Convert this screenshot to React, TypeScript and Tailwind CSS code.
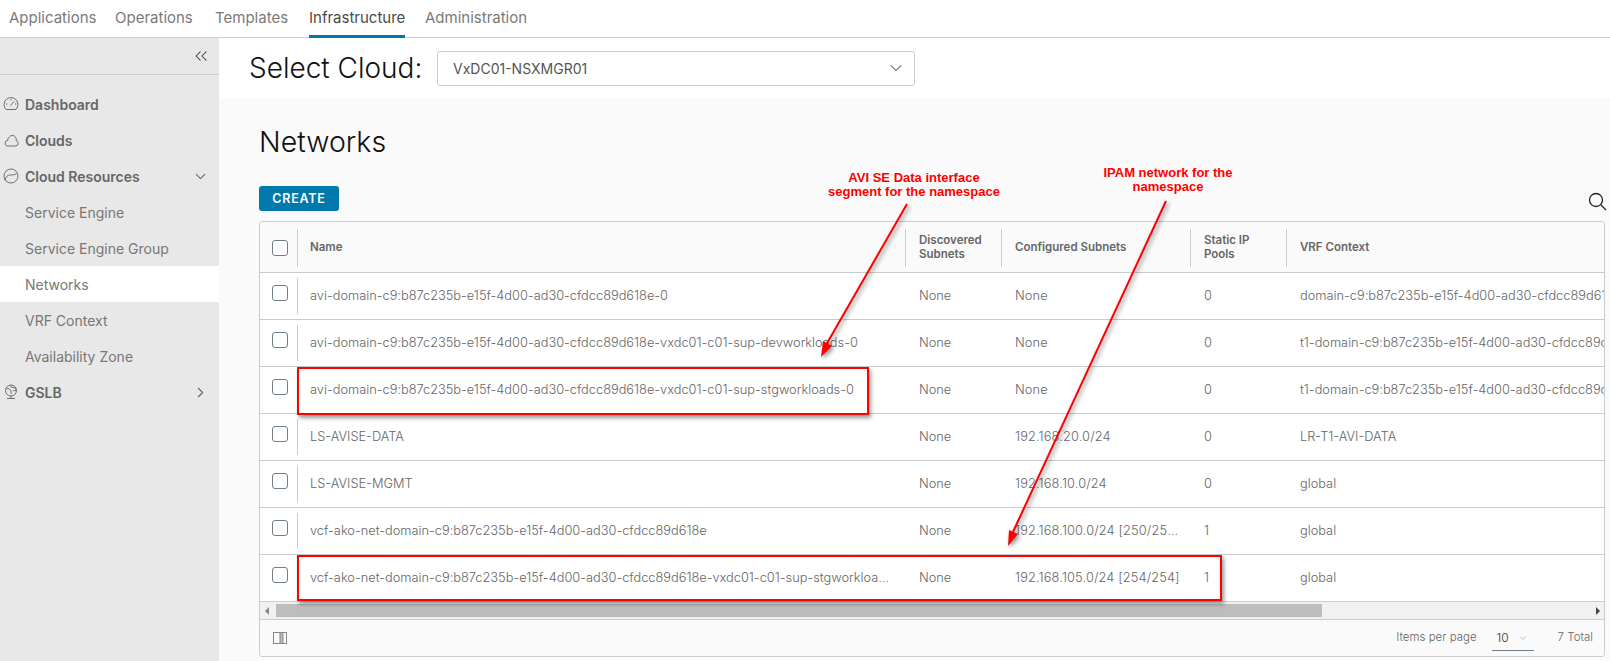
import React from "react";
import { ChevronDown, ChevronRight, ChevronsLeft } from "lucide-react";

const NAME_1 = "avi-domain-c9:b87c235b-e15f-4d00-ad30-cfdcc89d618e";
const VRF_1 = "domain-c9:b87c235b-e15f-4d00-ad30-cfdcc89d618e";

const rows = [
    { name: NAME_1 + "-0", disc: "None", conf: "None", pools: "0", vrf: VRF_1 + "-0" },
    { name: NAME_1 + "-vxdc01-c01-sup-devworkloads-0", disc: "None", conf: "None", pools: "0", vrf: "t1-" + VRF_1 + "-vxdc01-c01-sup-devworkloads-0" },
    { name: NAME_1 + "-vxdc01-c01-sup-stgworkloads-0", disc: "None", conf: "None", pools: "0", vrf: "t1-" + VRF_1 + "-vxdc01-c01-sup-stgworkloads-0" },
    { name: "LS-AVISE-DATA", disc: "None", conf: "192.168.20.0/24", pools: "0", vrf: "LR-T1-AVI-DATA" },
    { name: "LS-AVISE-MGMT", disc: "None", conf: "192.168.10.0/24", pools: "0", vrf: "global" },
    { name: "vcf-ako-net-domain-c9:b87c235b-e15f-4d00-ad30-cfdcc89d618e", disc: "None", conf: "192.168.100.0/24 [250/254]", pools: "1", vrf: "global", cut: true },
    { name: "vcf-ako-net-domain-c9:b87c235b-e15f-4d00-ad30-cfdcc89d618e-vxdc01-c01-sup-stgworkloads-0", disc: "None", conf: "192.168.105.0/24 [254/254]", pools: "1", vrf: "global" },
];

const gridCols = "grid grid-cols-[37px_608px_96px_189px_96px_minmax(0,1fr)]";

function DashIcon() {
    return (
        <svg viewBox="0 0 16 16" className="w-[16px] h-[16px]" fill="none" stroke="#6f6f6f" strokeWidth="1">
            <path d="M3 13.5a7 7 0 1 1 10 0z" />
            <path d="M7.5 9.5l3.5-4M3.2 8h1.3M12 8h1.3M8 3v1.3" />
        </svg>
    );
}

function CloudIcon() {
    return (
        <svg viewBox="0 0 16 16" className="w-[16px] h-[16px]" fill="none" stroke="#6f6f6f" strokeWidth="1">
            <path d="M4 14h8.5a2.8 2.8 0 0 0 .6-5.5 3.4 3.4 0 0 0-.8-3.6A3.6 3.6 0 0 0 6.4 5a3.4 3.4 0 0 0-1.6 3.4A2.9 2.9 0 0 0 4 14z" />
        </svg>
    );
}

function ResourceIcon() {
    return (
        <svg viewBox="0 0 16 16" className="w-[16px] h-[16px]" fill="none" stroke="#6f6f6f" strokeWidth="1">
            <circle cx="8" cy="8" r="7" />
            <path d="M2 12.500c1-4 2.500-5.500 5.500-5.500 2.500 0 4.500-.5 6-1.500" />
        </svg>
    );
}

function GlobeIcon() {
    return (
        <svg viewBox="0 0 16 16" className="w-[16px] h-[16px]" fill="none" stroke="#6f6f6f" strokeWidth="1">
            <circle cx="8" cy="6.500" r="5.500" />
            <path d="M3.500 5c2-1 3 0 4 1s0 3 1 4M8 1.500c-1 1 0 2 2 2s3 1 3 3c-1 0-2 0-3 .5" />
            <path d="M4 14.500h8M8 12v2.500" />
        </svg>
    );
}

function Check({ className = "" }: { className?: string }) {
    return <div className={"w-[16px] h-[16px] rounded-[3px] border border-[#6f7f8a] bg-white " + className} />;
}

function SideHead({ icon, label, right }: { icon: React.ReactNode; label: string; right?: React.ReactNode }) {
    return (
        <div className="h-[36px] flex items-center pl-[3px] pr-[10px]">
            {icon}
            <span className="ml-[6px] text-[14px] font-semibold text-[#666] grow">{label}</span>
            {right}
        </div>
    );
}

function SideItem({ label, active = false }: { label: string; active?: boolean }) {
    return (
        <div className={"h-[36px] flex items-center pl-[25px] text-[14px] text-[#777] " + (active ? "bg-white" : "")}>
            {label}
        </div>
    );
}

function HeadCell({ children, sep = true, className = "pl-[14px]" }: { children: React.ReactNode; sep?: boolean; className?: string }) {
    return (
        <div className={"relative flex items-center pr-2 text-[11.5px] leading-[14px] font-semibold text-[#666] " + className}>
            {sep && <span className="absolute left-0 top-[7px] bottom-[5px] w-px bg-[#ccc]" />}
            <span>{children}</span>
        </div>
    );
}

function Annotations() {
    return (
        <div className="absolute inset-0 pointer-events-none">
            <div className="absolute left-[297px] top-[367px] w-[572px] h-[48px] border-2 border-[#f00] shadow-[2px_3px_4px_rgba(0,0,0,0.4)]" />
            <div className="absolute left-[297px] top-[555px] w-[925px] h-[46px] border-2 border-[#f00] shadow-[2px_3px_4px_rgba(0,0,0,0.4)]" />
            <svg className="absolute left-0 top-0 w-[1610px] h-[661px] drop-shadow-[2px_2px_2px_rgba(0,0,0,0.45)]" viewBox="0 0 1610 661" fill="none">
                <path d="M907 204L826 345" stroke="#f00" strokeWidth="2" />
                <path d="M821 357L823 341L832 346z" fill="#f00" />
                <path d="M1166 201L1013 532" stroke="#f00" strokeWidth="2" />
                <path d="M1008 546L1009 530L1018 534z" fill="#f00" />
            </svg>
            <div className="absolute left-[814px] top-[171px] w-[200px] text-center font-['Liberation_Sans',sans-serif] font-bold text-[13px] leading-[14px] text-[#f00]">
                AVI SE Data interface<br />segment for the namespace
            </div>
            <div className="absolute left-[1068px] top-[166px] w-[200px] text-center font-['Liberation_Sans',sans-serif] font-bold text-[13px] leading-[14px] text-[#f00]">
                IPAM network for the<br />namespace
            </div>
        </div>
    );
}

export default function App() {
    return (
        <div className="relative w-[1610px] h-[661px] overflow-hidden bg-white font-['Inter',sans-serif] flex flex-col">
            {/* top tabs */}
            <div className="h-[38px] shrink-0 border-b border-[#ccc] flex pl-[9px] gap-[20px] text-[15px] text-[#7a7a7a]">
                <div className="pt-[7px] w-[86px] whitespace-nowrap">Applications</div>
                <div className="pt-[7px] w-[80px] whitespace-nowrap">Operations</div>
                <div className="pt-[7px] w-[74px] whitespace-nowrap">Templates</div>
                <div className="pt-[7px] w-[96px] h-[38px] border-b-[3px] border-[#0079ad] text-[#4a4a4a] whitespace-nowrap">Infrastructure</div>
                <div className="pt-[7px] whitespace-nowrap">Administration</div>
            </div>
            <div className="flex grow min-h-0">
                {/* sidebar */}
                <div className="w-[219px] shrink-0 bg-[#e8e8e8]">
                    <div className="h-[37px] border-b border-[#ccc] flex items-center justify-end pr-[8px]">
                        <ChevronsLeft size={20} strokeWidth={1.25} color="#444" />
                    </div>
                    <div className="pt-[11px]">
                        <SideHead icon={<DashIcon />} label="Dashboard" />
                        <SideHead icon={<CloudIcon />} label="Clouds" />
                        <SideHead icon={<ResourceIcon />} label="Cloud Resources" right={<ChevronDown size={17} strokeWidth={1.5} color="#666" />} />
                        <SideItem label="Service Engine" />
                        <SideItem label="Service Engine Group" />
                        <SideItem label="Networks" active />
                        <SideItem label="VRF Context" />
                        <SideItem label="Availability Zone" />
                        <SideHead icon={<GlobeIcon />} label="GSLB" right={<ChevronRight size={17} strokeWidth={1.5} color="#666" />} />
                    </div>
                </div>
                {/* main */}
                <div className="grow min-w-0 flex flex-col">
                    <div className="h-[60px] shrink-0 flex items-center pl-[30px] bg-white">
                        <span className="text-[28px] font-light text-[#111] w-[188px] whitespace-nowrap">Select Cloud:</span>
                        <div className="w-[478px] h-[35px] border border-[#ccc] rounded-[3px] flex items-center justify-between pl-[15px] pr-[8px] text-[14px] text-[#555]">
                            <span>VxDC01-NSXMGR01</span>
                            <ChevronDown size={20} strokeWidth={1.25} color="#555" />
                        </div>
                    </div>
                    <div className="grow bg-[#fafafa] pl-[40px] pr-[5px] pt-[28px]">
                        <h1 className="text-[28.5px] leading-[32px] font-light text-[#111]">Networks</h1>
                        <div className="mt-[28px] flex items-center justify-between">
                            <button className="w-[80px] h-[25px] pt-[2px] rounded-[3px] bg-[#0079ad] text-white text-[12.5px] font-semibold tracking-[0.06em]">CREATE</button>
                            <svg viewBox="0 0 20 20" className="w-[20px] h-[20px] -mr-[3px] translate-y-[3px]" fill="none" stroke="#222" strokeWidth="1.300">
                                <circle cx="8" cy="8" r="6.500" />
                                <path d="M13 13l5 5" />
                            </svg>
                        </div>
                        {/* table */}
                        <div className="mt-[10px] h-[436px] border border-[#ccc] rounded-[3px] overflow-hidden flex flex-col">
                            <div className={gridCols + " h-[51px] shrink-0 bg-[#fafafa] border-b border-[#ccc]"}>
                                <div className="flex justify-center pl-[2px] pt-[18px]"><Check /></div>
                                <HeadCell className="pl-[13px]">Name</HeadCell>
                                <HeadCell>Discovered<br />Subnets</HeadCell>
                                <HeadCell>Configured Subnets</HeadCell>
                                <HeadCell>Static IP<br />Pools</HeadCell>
                                <HeadCell>VRF Context</HeadCell>
                            </div>
                            {rows.map((r, i) => (
                                <div key={i} className={gridCols + " h-[47px] shrink-0 bg-white border-b border-[#ccc] text-[12.8px] font-light text-[#666]"}>
                                    <div className="flex justify-center pl-[2px] pt-[12px]"><Check /></div>
                                    <div className="relative flex items-center pl-[13px] pr-[10px] min-w-0">
                                        <span className="absolute left-0 top-[5px] bottom-[5px] w-px bg-[#ccc]" />
                                        <span className="truncate">{r.name}</span>
                                    </div>
                                    <div className="flex items-center pl-[14px]">{r.disc}</div>
                                    <div className="flex items-center pl-[14px] min-w-0">
                                        <span className={"block truncate tracking-[0.01em] " + (r.cut ? "max-w-[164px]" : "max-w-[170px]")}>{r.conf}</span>
                                    </div>
                                    <div className="flex items-center pl-[14px]">{r.pools}</div>
                                    <div className="flex items-center pl-[14px] overflow-hidden whitespace-nowrap">{r.vrf}</div>
                                </div>
                            ))}
                            {/* scrollbar */}
                            <div className="h-[18px] shrink-0 bg-[#f1f1f1] border-b border-[#ccc] flex items-center pl-[5px] pr-[4px]">
                                <span className="w-0 h-0 border-y-[4px] border-y-transparent border-r-[4px] border-r-[#888]" />
                                <div className="ml-[7px] w-[1046px] h-[13px] bg-[#bdbdbd]" />
                                <span className="ml-auto w-0 h-0 border-y-[4px] border-y-transparent border-l-[4px] border-l-[#444]" />
                            </div>
                            {/* footer */}
                            <div className="grow flex items-center justify-between pl-[13px] pr-[11px] bg-[#fafafa] text-[11.5px] font-light text-[#666]">
                                <svg viewBox="0 0 14 12" className="w-[14px] h-[12px]" fill="none" stroke="#888">
                                    <rect x="0.500" y="0.500" width="13" height="11" />
                                    <rect x="7" y="1" width="3" height="10" fill="#bbb" stroke="none" />
                                    <path d="M7 .5v11M10 .5v11" />
                                </svg>
                                <div className="flex items-center">
                                    <span>Items per page</span>
                                    <div className="ml-[15px] w-[42px] h-[24px] mt-[1px] border-b border-[#6f7f8a] flex items-center pl-[5px] gap-[8px] text-[12px] text-[#333]">
                                        <span>10</span>
                                        <ChevronDown size={12} strokeWidth={1} color="#888" />
                                    </div>
                                    <span className="ml-[24px]">7 Total</span>
                                </div>
                            </div>
                        </div>
                    </div>
                </div>
            </div>
            <Annotations />
        </div>
    );
}
